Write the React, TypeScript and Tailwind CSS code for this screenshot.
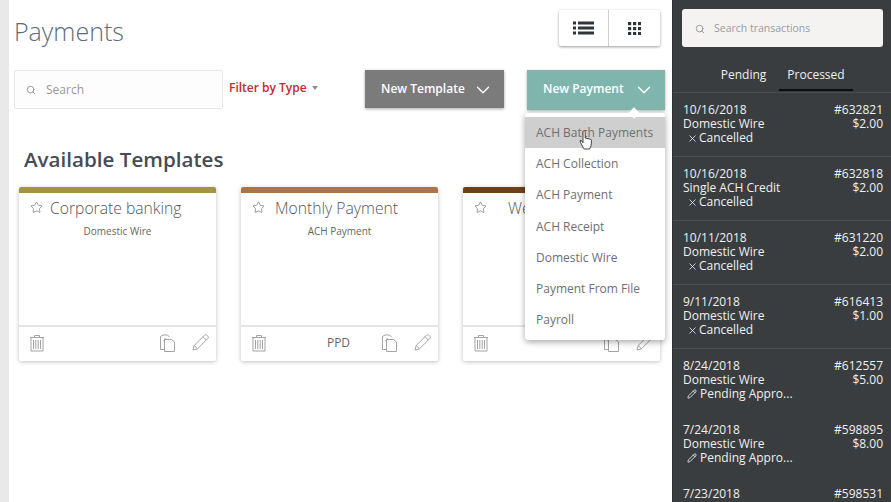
import React from "react";
import { ChevronDown, Search, Star, X, Pencil } from "lucide-react";

const ListIcon = () => (
  <svg width="21" height="14" viewBox="0 0 21 14" fill="#2f3539">
    <rect x="0" y="0.500" width="3" height="3" />
    <rect x="5" y="0.500" width="16" height="3" />
    <rect x="0" y="5.500" width="3" height="3" />
    <rect x="5" y="5.500" width="16" height="3" />
    <rect x="0" y="10.500" width="3" height="3" />
    <rect x="5" y="10.500" width="16" height="3" />
  </svg>
);
const GridIcon = () => (
  <svg width="13" height="13" viewBox="0 0 13 13" fill="#2f3539">
    {[0, 5, 10].map((y) =>
      [0, 5, 10].map((x) => <rect key={`${x}-${y}`} x={x} y={y} width="3.200" height="3.200" />)
    )}
  </svg>
);
const TrashIcon = () => (
  <svg width="16" height="18" viewBox="0 0 16 18" fill="none" stroke="#a3a3a3" strokeWidth="1">
    <path d="M1 3.500h14M5.500 3.500V1.500h5v2M2 3.500v13.500h12V3.500M4.500 6v9M6.800 6v9M9.200 6v9M11.500 6v9" />
  </svg>
);
const CopyIcon = () => (
  <svg width="17" height="18" viewBox="0 0 17 18" fill="none" stroke="#a3a3a3" strokeWidth="1">
    <path d="M5 15.500H1.500V2.500L4 1h4.500l2 2" />
    <path d="M5.500 5.500h7l3 2.500v9.500h-10z" />
    <path d="M4.500 7l2-3" />
  </svg>
);
const PencilIcon = () => (
  <svg width="17" height="17" viewBox="0 0 17 17" fill="none" stroke="#a3a3a3" strokeWidth="1">
    <path d="M1 16l1.200-4.500L12.500 1.200a1.600 1.600 0 0 1 2.300 0l1 1a1.600 1.600 0 0 1 0 2.300L5.500 14.800z" />
    <path d="M2.200 11.500l3.300 3.300M11 2.700l3.300 3.300" />
  </svg>
);

const templates = [
  { bar: "bg-[#a39343]", title: "Corporate banking", sub: "Domestic Wire", code: "", titleClass: "" },
  { bar: "bg-[#ab7647]", title: "Monthly Payment", sub: "ACH Payment", code: "PPD", titleClass: "pl-[3px]" },
  { bar: "bg-[#6d421a]", title: "Weekly Wire", sub: "Domestic Wire", code: "", titleClass: "pl-[14px]" },
];

const menu = ["ACH Batch Payments", "ACH Collection", "ACH Payment", "ACH Receipt", "Domestic Wire", "Payment From File", "Payroll"];

const txns = [
  { date: "10/16/2018", id: "#632821", type: "Domestic Wire", amt: "$2.00", status: "Cancelled", sep: true },
  { date: "10/16/2018", id: "#632818", type: "Single ACH Credit", amt: "$2.00", status: "Cancelled", sep: true },
  { date: "10/11/2018", id: "#631220", type: "Domestic Wire", amt: "$2.00", status: "Cancelled", sep: true },
  { date: "9/11/2018", id: "#616413", type: "Domestic Wire", amt: "$1.00", status: "Cancelled", sep: true },
  { date: "8/24/2018", id: "#612557", type: "Domestic Wire", amt: "$5.00", status: "Pending Appro...", sep: false },
  { date: "7/24/2018", id: "#598895", type: "Domestic Wire", amt: "$8.00", status: "Pending Appro...", sep: false },
  { date: "7/23/2018", id: "#598531", type: "Domestic Wire", amt: "$3.00", status: "Pending Appro...", sep: false },
];

function Card({ t }: { t: (typeof templates)[number] }) {
  return (
    <div className="w-[197px] h-[174px] bg-white rounded-[2px] shadow-[0_1px_4px_rgba(0,0,0,0.25)] flex flex-col overflow-hidden">
      <div className={`h-[6px] ${t.bar}`} />
      <div className="flex-1 flex flex-col">
        <div className="flex items-center pl-[11px] pt-[3px] h-[26px]">
          <Star size={13} strokeWidth={1.2} className="text-[#666] shrink-0" />
          <span className={`ml-[7px] text-[15.700px] leading-[20px] font-light text-[#555] whitespace-nowrap ${t.titleClass}`}>{t.title}</span>
        </div>
        <div className="text-center text-[10px] leading-[14px] text-[#666] mt-[5px]">{t.sub}</div>
      </div>
      <div className="h-[36px] border-t-2 border-[#e4e4e4] flex items-center pb-[3px] pl-[10px] pr-[7px]">
        <TrashIcon />
        <span className="flex-1 pl-[29px] text-center text-[12px] text-[#666]">{t.code}</span>
        <span className="mr-[16px]"><CopyIcon /></span>
        <PencilIcon />
      </div>
    </div>
  );
}

export default function App() {
  return (
    <div className="relative w-[891px] h-[502px] overflow-hidden flex bg-white font-['Open_Sans',sans-serif]">
      <div className="w-[9px] bg-[#e9e9e9] shrink-0" />
      <main className="w-[663px] shrink-0 flex flex-col">
        <div className="h-[70px] flex justify-between items-start pl-[5px] pr-[12px]">
          <h1 className="mt-[15px] text-[25px] leading-[32px] font-light text-[#5f6b77]">Payments</h1>
          <div className="mt-[10px] flex h-[36px] bg-white rounded-[2px] shadow-[0_1px_3px_rgba(0,0,0,0.4)]">
            <div className="w-[50px] flex items-center justify-center border-r border-[#cfcfcf]">
              <ListIcon />
            </div>
            <div className="w-[51px] flex items-center justify-center">
              <GridIcon />
            </div>
          </div>
        </div>
        <div className="h-[40px] flex items-start pl-[5px]">
          <div className="w-[209px] h-[39px] pt-[1px] border border-[#e8e8e8] rounded-[2px] bg-[#fdfdfd] flex items-center pl-[11px]">
            <Search size={10} className="text-[#8a8a8a]" />
            <span className="ml-[10px] text-[12px] text-[#999]">Search</span>
          </div>
          <div className="ml-[6px] mt-[8px] w-[90px] flex items-center h-[20px]">
            <span className="text-[12px] font-semibold text-[#c8272c] whitespace-nowrap">Filter by Type</span>
            <span className="ml-[5px] w-0 h-0 border-x-[3.500px] border-x-transparent border-t-[4px] border-t-[#8d8d8d]" />
          </div>
          <div className="ml-[46px] w-[139px] h-[38px] bg-[#7b7b7b] shadow-[0_1px_3px_rgba(0,0,0,0.35)] flex items-center pl-[16px] text-white text-[12px] font-semibold">
            <span>New Template</span>
            <ChevronDown size={22} strokeWidth={1.5} className="ml-[7px] mt-[2px]" />
          </div>
          <div className="ml-[23px] w-[138px] h-[40px] bg-[#80b5ae] shadow-[0_1px_3px_rgba(0,0,0,0.3)] flex items-center pl-[16px] pb-[2px] text-white text-[12px] font-semibold">
            <span>New Payment</span>
            <ChevronDown size={22} strokeWidth={1.5} className="ml-[9px] mt-[2px]" />
          </div>
        </div>
        <h2 className="mt-[35px] ml-[15px] text-[20.600px] leading-[28px] font-semibold text-[#444c54]">Available Templates</h2>
        <div className="mt-[14px] ml-[10px] flex gap-[25px]">
          {templates.map((t) => (
            <Card key={t.title} t={t} />
          ))}
        </div>
      </main>
      <aside className="w-[219px] shrink-0 bg-[#3a3d3f] text-[#f0f0f0] border-l-[1px] border-[#2e3032]">
        <div className="pl-[9px] pr-[8px] pt-[9px]">
          <div className="h-[38px] pt-[1px] bg-[#f4f3f2] rounded-[3px] flex items-center pl-[13px]">
            <Search size={10} className="text-[#8a8a8a]" />
            <span className="ml-[9px] text-[10.500px] text-[#9a9a9a]">Search transactions</span>
          </div>
        </div>
        <div className="h-[46px] flex items-stretch border-b border-[#4b4e50] pl-[41px] text-[12px]">
          <div className="w-[58px] flex items-center justify-center pt-[10px] pl-[1px]">Pending</div>
          <div className="w-[74px] ml-[7px] flex items-center justify-center border-b-2 border-[#0d0d0d] pt-[14px] mb-[1px]">Processed</div>
        </div>
        {txns.map((t) => (
          <div key={t.id} className={`h-[64px] pt-[10px] pl-[10px] pr-[8px] text-[12px] leading-[14px] ${t.sep ? "border-b border-[#4b4e50]" : ""}`}>
            <div className="flex justify-between"><span>{t.date}</span><span>{t.id}</span></div>
            <div className="flex justify-between"><span>{t.type}</span><span>{t.amt}</span></div>
            <div className="flex items-center pl-[4px]">
              {t.status === "Cancelled" ? <X size={11} strokeWidth={1.8} /> : <Pencil size={10} strokeWidth={2} />}
              <span className={t.status === "Cancelled" ? "ml-[1px]" : "ml-[3px]"}>{t.status}</span>
            </div>
          </div>
        ))}
      </aside>
      <div className="absolute left-[525px] top-[113px] w-[140px] bg-white rounded-[3px] shadow-[0_2px_6px_rgba(0,0,0,0.35)] pt-[4px] pb-[4px]">
        {menu.map((m, i) => (
          <div key={m} className={`relative h-[31.300px] flex items-center pl-[11px] text-[12px] text-[#6f6f6f] whitespace-nowrap ${i === 0 ? "bg-[#cfcfcf]" : ""}`}>
            {m}
          </div>
        ))}
        <svg className="absolute left-[54px] top-[17px]" width="14" height="20" viewBox="0 0 14 20">
          <path d="M4 1.500a1.200 1.200 0 0 1 2.200 0V8l5 1.200a1.500 1.500 0 0 1 1.300 1.600L12 16l-1.500 3H5l-3.500-6.500L1 10.500l1.800.3 1.200 2z" fill="#fff" stroke="#333" strokeWidth="0.9" />
        </svg>
        <div className="absolute right-[27px] -top-[4px] w-[8px] h-[8px] rotate-45 bg-white" />
      </div>
    </div>
  );
}
